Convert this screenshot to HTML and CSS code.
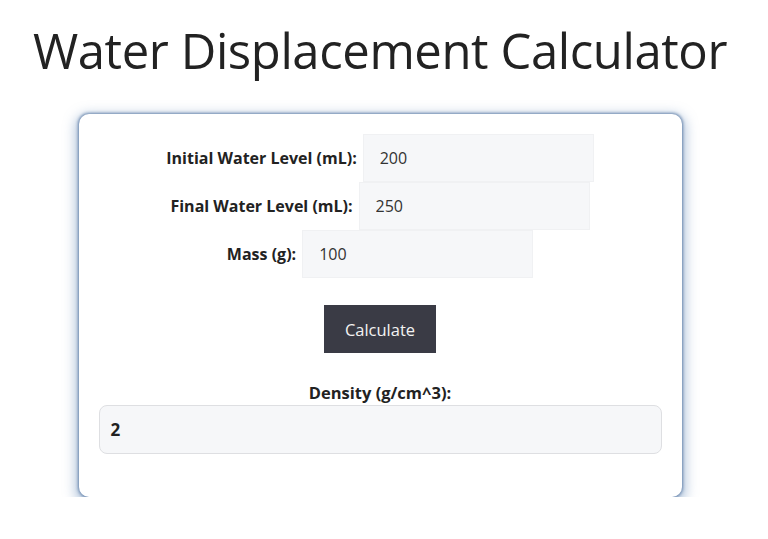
FILE: index.html
```html
<!DOCTYPE html>
<html lang="en">
<head>
<meta charset="utf-8">
<title>Water Displacement Calculator</title>
<link rel="stylesheet" href="styles.css">
</head>
<body>
<h1 class="title">Water Displacement Calculator</h1>
<div class="card">
  <div class="row">
    <label class="label" for="initial">Initial Water Level (mL):</label>
    <input class="field" id="initial" type="text" value="200">
  </div>
  <div class="row">
    <label class="label" for="final">Final Water Level (mL):</label>
    <input class="field" id="final" type="text" value="250">
  </div>
  <div class="row">
    <label class="label" for="mass">Mass (g):</label>
    <input class="field" id="mass" type="text" value="100">
  </div>
  <div class="actions">
    <button class="btn" type="button">Calculate</button>
  </div>
  <div class="result-label">Density (g/cm^3):</div>
  <div class="result">2</div>
</div>
</body>
</html>
```

FILE: styles.css
```css
html, body {
  margin: 0;
  padding: 0;
  background: #ffffff;
}
body {
  padding-right: 8px;
  font-family: "Open Sans", "Noto Sans", sans-serif;
  color: #222;
}
.title {
  margin: 20px 0 0;
  height: 94px;
  line-height: 60px;
  text-align: center;
  font-weight: 400;
  font-size: 49px;
  color: #222;
  letter-spacing: -0.4px;
}
.card {
  width: 603px;
  box-sizing: border-box;
  margin: 0 auto;
  padding: 20px 20px 43px;
  background: #fff;
  border-radius: 10px;
  box-shadow: 0 0 3px 1px rgba(90, 122, 165, 0.85), 0 4px 12px 4px rgba(110, 145, 190, 0.5);
}
.row {
  display: flex;
  justify-content: center;
  align-items: center;
  gap: 6px;
}
.label {
  font-weight: 700;
  font-size: 16px;
  color: #222;
}
.field {
  width: 231px;
  height: 48px;
  box-sizing: border-box;
  padding: 0 16px;
  background: #f6f7f9;
  border: 1px solid #f0f1f3;
  font-family: inherit;
  font-size: 16px;
  color: #333;
  outline: none;
}
.actions {
  display: flex;
  justify-content: center;
  margin-top: 27px;
}
.btn {
  width: 112px;
  height: 48px;
  border: none;
  border-radius: 0;
  background: #3a3b45;
  color: #f2f2f2;
  font-family: inherit;
  font-size: 16.5px;
}
.result-label {
  margin-top: 27px;
  text-align: center;
  font-weight: 700;
  font-size: 16.5px;
  line-height: 25px;
}
.result {
  height: 49px;
  box-sizing: border-box;
  display: flex;
  align-items: center;
  padding: 0 11px;
  background: #f6f7f9;
  border: 1px solid #dedfe2;
  border-radius: 8px;
  font-weight: 700;
  font-size: 17px;
  color: #222;
}
```
